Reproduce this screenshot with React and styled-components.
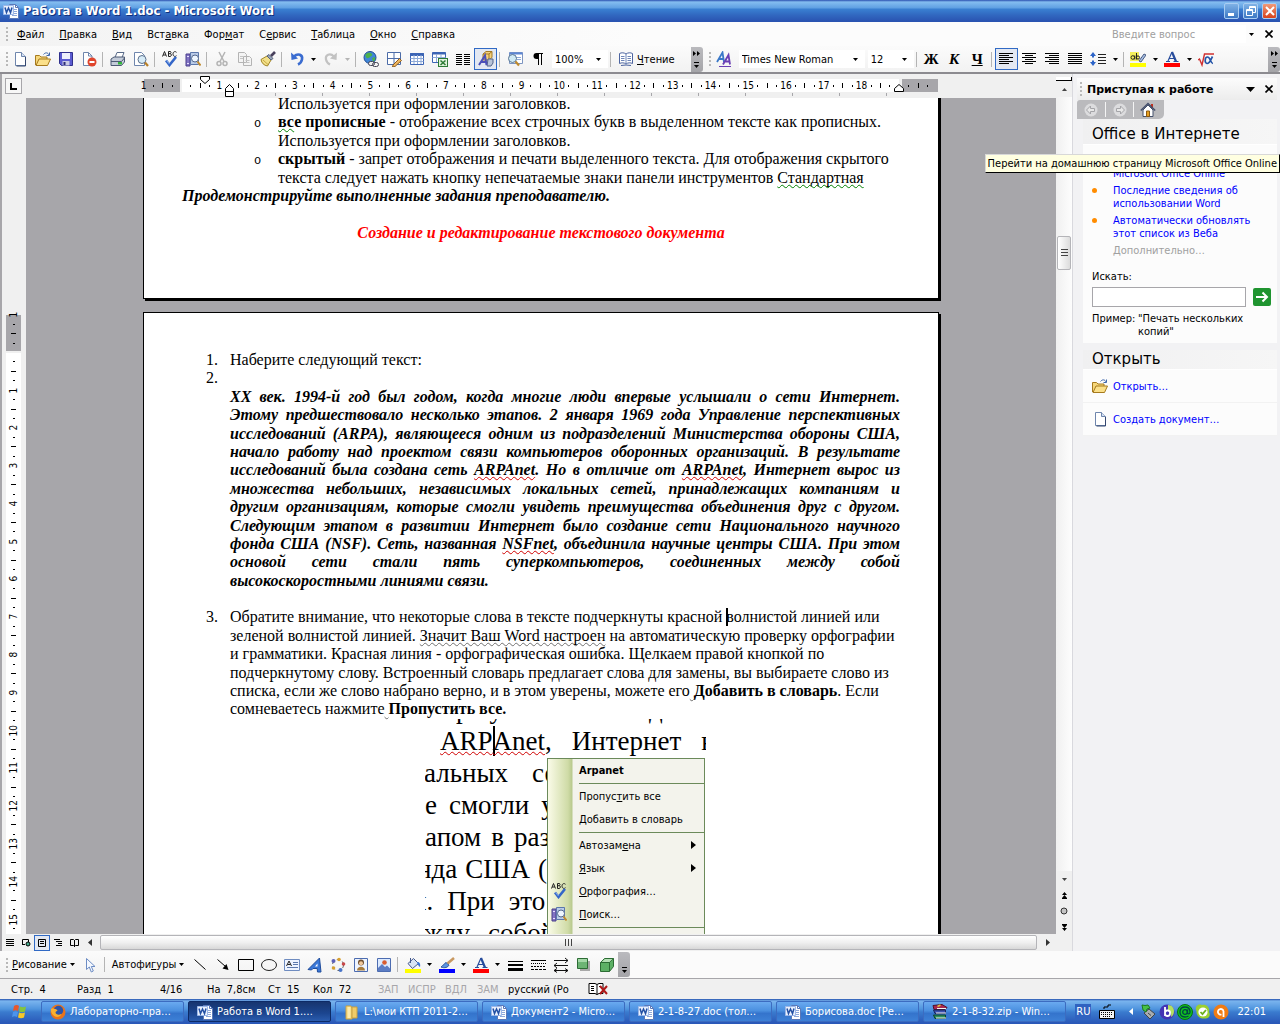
import React from "react"
import styled, { createGlobalStyle, css } from "styled-components"

const GlobalStyle = createGlobalStyle`
  * {
    box-sizing: border-box;
  }
  body {
    margin: 0;
    background: #f0f0f0;
    color: #000;
    font: 11px/13px "DejaVu Sans Condensed", "DejaVu Sans", sans-serif;
  }
  button, input, select {
    margin: 0;
    padding: 0;
    border: 0;
    background: none;
    color: inherit;
    font: inherit;
  }
  svg {
    display: block;
    flex: none;
  }
`

/* ---------- window frame ---------- */

const Desktop = styled.div`
  display: flex;
  flex-direction: column;
  height: 100vh;
  overflow: hidden;
`

const TitleBar = styled.header`
  display: flex;
  align-items: center;
  flex: none;
  height: 22px;
  padding: 0 3px;
  gap: 4px;
  color: #fff;
  background: linear-gradient(#2b50b0 0, #84bdf0 2px, #5f9fe2 8px, #3a80d2 9px, #3168c0 15px, #2a54b2 21px);
`

const WindowTitle = styled.h1`
  flex: 1;
  margin: 0;
  font: bold 13px/16px "DejaVu Sans Condensed", sans-serif;
  text-shadow: 1px 1px #10307c;
`

const WindowButton = styled.button`
  display: flex;
  align-items: center;
  justify-content: center;
  width: 15px;
  height: 16px;
  border: 1px solid #a9cdf2;
  border-radius: 2px;
  background: ${props =>
    props.$close
      ? "linear-gradient(#f09a78, #d8431c)"
      : "linear-gradient(#7fb2e6, #3c78c4)"};
`

const MenuBar = styled.nav`
  display: flex;
  align-items: center;
  flex: none;
  height: 24px;
  padding: 0 0 0 6px;
  background: linear-gradient(90deg, #f3f3f3, #fcfcfc 50%);
`

const Grip = styled.span`
  flex: none;
  width: 2px;
  height: 14px;
  background: repeating-linear-gradient(#b8b8b8 0 2px, transparent 2px 4px);
`

const Menus = styled.div`
  display: flex;
  flex: 1;
  gap: 15px;
  padding-left: 9px;
`

const HelpInput = styled.input`
  width: 136px;
  height: 18px;
  padding-left: 2px;
  background: #fff;
  &::placeholder {
    color: #a0a0a0;
    opacity: 1;
  }
`

/* ---------- toolbars ---------- */

const ToolRow = styled.div`
  display: flex;
  flex: none;
  height: ${props => props.$height}px;
  background: #fbfbfb;
  border-bottom: ${props => props.$line};
`

const Toolbar = styled.div`
  display: flex;
  align-items: center;
  flex: ${props => (props.$grow ? 1 : "none")};
  padding-left: 6px;
  background: linear-gradient(#fbfbfb, #f2f2f2);
`

const ToolButton = styled.button`
  display: flex;
  align-items: center;
  justify-content: center;
  flex: none;
  width: 23px;
  height: 22px;
  ${props =>
    props.$active &&
    css`
      border: 1px solid #316ac5;
      background: #e3e8f2;
    `}
`

const DropButton = styled(ToolButton)`
  width: 11px;
`

const TextButton = styled.button`
  display: flex;
  align-items: center;
  flex: none;
  gap: 3px;
  padding: 0 4px;
  height: 22px;
  white-space: nowrap;
`

const Separator = styled.span`
  flex: none;
  width: 1px;
  height: 15px;
  margin: 0 3px 0 2px;
  background: #b4b4b4;
`

const SelectWrap = styled.label`
  display: grid;
  grid-template-columns: 1fr 12px;
  align-items: center;
  flex: none;
  width: ${props => props.$width}px;
  height: 18px;
  margin-left: 3px;
  background: #fff;
  select {
    grid-area: 1 / 1 / 2 / 3;
    appearance: none;
    width: 100%;
    padding-left: 3px;
  }
  svg {
    grid-area: 1 / 2;
    pointer-events: none;
  }
`

const ToolbarEnd = styled.button`
  display: flex;
  flex-direction: column;
  align-items: center;
  justify-content: flex-end;
  flex: none;
  gap: 6px;
  width: 12px;
  height: 25px;
  margin-left: auto;
  padding-bottom: 4px;
  border-radius: 0 3px 3px 0;
  background: linear-gradient(#bababe, #a4a4a8);
`

const Spacer = styled.span`
  flex: none;
  width: ${props => props.$width}px;
`

const Letter = styled.span`
  font: ${props => props.$font || ""} bold 15px/18px "Liberation Serif", serif;
  text-decoration: ${props => (props.$underline ? "underline" : "none")};
`

/* ---------- editor ---------- */

const Work = styled.div`
  display: flex;
  flex: 1;
  min-height: 0;
`

const Editor = styled.main`
  display: grid;
  grid-template-columns: 24px 1fr 16px;
  grid-template-rows: 24px 1fr 17px;
  flex: 1;
  min-width: 0;
  border-left: 2px solid #a7a6aa;
  border-right: 1px solid #d9d9de;
  background: #f0f0f0;
`

const TabBox = styled.button`
  align-self: center;
  width: 17px;
  height: 16px;
  margin-left: 3px;
  border: 1px solid #a7a6aa;
  background: #f7f7f7;
  svg {
    margin: auto;
  }
`

const HRuler = styled.div`
  display: flex;
  justify-content: center;
  align-items: flex-start;
  padding-top: 5px;
  overflow: hidden;
`

const HStrip = styled.div`
  position: relative;
  flex: none;
  width: 794px;
  height: 13px;
  background: linear-gradient(90deg, #a7a6aa 36px, #f0f0f0 36px 38px, #fff 38px 755px, #f0f0f0 755px 758px, #a7a6aa 758px);
`

const HTicks = styled.div`
  display: flex;
  height: 13px;
  margin-left: -5px;
`

const VRuler = styled.div`
  padding: 217px 0 0 4px;
  overflow: hidden;
`

const VStrip = styled.div`
  width: 15px;
  height: 100%;
  background: linear-gradient(#a7a6aa 36px, #f0f0f0 36px 38px, #fff 38px);
`

const VTicks = styled.div`
  display: flex;
  flex-direction: column;
  height: 100%;
  transform: translateY(-5px);
`

const Centimetre = styled.span`
  display: flex;
  flex-direction: ${props => (props.$vertical ? "column" : "row")};
  flex: 0 0 1cm;
  font-size: 10px;
`

const Mark = styled.span`
  display: flex;
  align-items: center;
  justify-content: center;
  flex: 1 1 0;
  min-width: 0;
  min-height: 0;
  &::before {
    content: "";
    width: ${props => props.$w}px;
    height: ${props => props.$h}px;
    background: #000;
  }
`

const MarkLabel = styled.span`
  display: flex;
  align-items: center;
  justify-content: center;
  flex: 1 1 0;
  min-width: 0;
  min-height: 0;
  line-height: 9px;
  transform: ${props => (props.$vertical ? "rotate(-90deg)" : "none")};
`

const TabStops = styled.div`
  height: 3px;
  margin: 1px 37px 0 85px;
  background: repeating-linear-gradient(90deg, transparent 0 46px, #a7a6aa 46px 47px);
`

const IndentMarker = styled.span`
  position: absolute;
  left: ${props => props.$left}px;
  top: ${props => props.$top}px;
`

const Canvas = styled.div`
  display: flex;
  flex-direction: column;
  align-items: center;
  min-height: 0;
  overflow: hidden;
  background: #a7a6aa;
`

const Page = styled.article`
  flex: none;
  width: 796px;
  height: ${props => props.$height}px;
  margin: ${props => props.$gap};
  padding: ${props => props.$padTop}px 38px 0;
  border: 1px solid #000;
  background: #fff;
  box-shadow: 2px 2px #000;
  font: 16px/1.15 "Liberation Serif", "Times New Roman", serif;
  white-space: nowrap;
`

const BulletList = styled.ul`
  margin: 0;
  padding-left: 96px;
  list-style: none;
  li {
    position: relative;
  }
`

const Bullet = styled.span`
  position: absolute;
  left: -24px;
  font: 12px/22px "Liberation Mono", monospace;
`

const Line = styled.div`
  text-align: ${props => props.$align || "left"};
  text-align-last: ${props => props.$align || "left"};
`

const Emphasis = styled.p`
  margin: 0;
  color: ${props => props.$color || "#000"};
  font-weight: bold;
  font-style: italic;
`

const Numbered = styled.div`
  display: grid;
  grid-template-columns: 24px 1fr;
  padding-left: 24px;
  min-height: 1.15em;
`

const Justified = styled(Emphasis)`
  padding-left: 48px;
`

const Wavy = styled.span`
  text-decoration: underline wavy ${props => props.$color || "#d00000"};
  text-decoration-thickness: 1px;
  text-decoration-skip-ink: none;
  text-underline-offset: 1px;
`

const Caret = styled.span`
  display: inline-block;
  width: 2px;
  height: ${props => props.$height}px;
  margin-right: -2px;
  vertical-align: ${props => props.$drop}px;
  background: #000;
`

const Figure = styled.figure`
  position: relative;
  width: 281px;
  height: 216px;
  margin: 0 0 0 243px;
  overflow: hidden;
`

const BigLine = styled.div`
  display: flex;
  gap: ${props => props.$gap}px;
  height: 32px;
  margin-left: ${props => props.$left}px;
  font-size: 27px;
  line-height: 32px;
`

/* only the descenders of this line show */
const ClippedLine = styled(BigLine)`
  align-items: flex-end;
  height: 6px;
  overflow: hidden;
`

const ContextMenu = styled.ul`
  position: absolute;
  left: 122px;
  top: 39px;
  width: 158px;
  height: 200px;
  margin: 0;
  padding: 0 0 0 25px;
  list-style: none;
  border: 1px solid #6b8a5a;
  background: linear-gradient(90deg, #fafbe8, #cfdba6 20px, #b8c98e 24px, #f3f3ec 25px);
  font: 11px/23px "DejaVu Sans Condensed", "DejaVu Sans", sans-serif;
`

const ContextItem = styled.li`
  display: flex;
  align-items: center;
  height: 23px;
  padding: 0 8px 0 6px;
  font-weight: ${props => (props.$bold ? "bold" : "normal")};
  > svg:first-child {
    margin: 0 12px 0 -28px;
  }
  > svg:last-child {
    margin-left: auto;
  }
`

const ContextRule = styled.li`
  height: 1px;
  margin: 1px 0 1px 6px;
  background: #6b8a5a;
`

const VScroll = styled.div`
  display: flex;
  flex-direction: column;
  align-items: center;
  grid-row: 1 / 4;
  grid-column: 3;
  padding-bottom: 16px;
`

const SplitHandle = styled.span`
  width: 100%;
  height: 4px;
  margin-top: 3px;
  border: solid #000;
  border-width: 0 1px 1px 0;
  background: #fff;
`

const ScrollButton = styled.button`
  display: flex;
  align-items: center;
  justify-content: center;
  flex: none;
  width: 16px;
  height: 16px;
`

const VTrack = styled.div`
  display: flex;
  flex-direction: column;
  flex: 1;
  width: 100%;
  background: linear-gradient(90deg, #f0f0f0, #fdfdfd);
  &::before {
    content: "";
    flex: 3;
  }
  &::after {
    content: "";
    flex: 13;
  }
`

const VThumb = styled.span`
  display: flex;
  align-items: center;
  justify-content: center;
  height: 34px;
  margin: 0 1px;
  border: 1px solid #b4b4b8;
  border-radius: 2px;
  background: linear-gradient(90deg, #fff, #dcdcdc);
`

const HScroll = styled.div`
  display: flex;
  align-items: center;
  grid-column: 1 / 3;
`

const ViewButton = styled(ScrollButton)`
  border: 1px solid ${props => (props.$active ? "#316ac5" : "transparent")};
  background: ${props => (props.$active ? "#e3e8f2" : "none")};
`

const HThumb = styled.span`
  display: flex;
  align-items: center;
  justify-content: center;
  flex: 1;
  height: 15px;
  margin: 0 3px 0 2px;
  border: 1px solid #b4b4b8;
  border-radius: 2px;
  background: linear-gradient(#fff, #f0f0f0 50%, #d8d8d8);
`

/* ---------- task pane ---------- */

const Pane = styled.aside`
  position: relative;
  display: flex;
  flex-direction: column;
  flex: none;
  width: 207px;
  padding: 4px 3px 0 4px;
  background: #f2f2f4;
`

const PaneHead = styled.div`
  display: flex;
  align-items: center;
  height: 22px;
  padding: 0 3px;
  background: linear-gradient(#fcfcfc, #ececec);
  h2 {
    flex: 1;
    margin: 0 0 0 5px;
    font: bold 11px/13px "DejaVu Sans", sans-serif;
  }
`

const PaneNav = styled.div`
  display: flex;
  align-items: center;
  width: 87px;
  height: 19px;
  border-radius: 3px 0 5px 0;
  background: #bababd;
`

const PaneNavButton = styled.button`
  display: flex;
  align-items: center;
  justify-content: center;
  width: 28px;
  height: 15px;
  & + & {
    border-left: 1px solid #f4f4f4;
  }
`

const Section = styled.section`
  margin: 0 0 7px 6px;
  background: #fcfcfc;
  h3 {
    margin: 0;
    padding: ${props => props.$headPad};
    border-bottom: 1px solid #fff;
    background: linear-gradient(90deg, #f0f0f1, #f6f6f6);
    font: 15px/19px "DejaVu Sans", sans-serif;
  }
`

const NewsList = styled.ul`
  margin: 0;
  padding: 22px 9px 0;
  list-style: none;
  li {
    display: flex;
    gap: 16px;
    margin-bottom: 4px;
  }
  li::before {
    content: "";
    flex: none;
    width: 5px;
    height: 5px;
    margin-top: 4px;
    border-radius: 50%;
    background: ${props => props.$dot};
  }
  li:last-child::before,
  li:first-child::before {
    background: none;
  }
`

const PaneLink = styled.a`
  color: ${props => (props.$muted ? "#a0a0a0" : "#0000ff")};
  text-decoration: none;
`

const FileLink = styled(PaneLink)`
  display: flex;
  align-items: center;
  gap: 5px;
  height: 33px;
  padding-left: 9px;
  border-bottom: 1px solid #f2f2f2;
`

const SearchForm = styled.div`
  display: grid;
  grid-template-columns: 1fr 18px;
  gap: 4px 7px;
  padding: 9px 6px 3px 9px;
  label {
    grid-column: 1 / 3;
  }
  input {
    height: 20px;
    min-width: 0;
    border: 1px solid #a7a6aa;
    background: #fff;
  }
`

const Example = styled.p`
  display: grid;
  grid-template-columns: 46px 1fr;
  margin: 0;
  padding: 2px 9px 5px;
`

const Tip = styled.div`
  position: absolute;
  z-index: 2;
  top: 80px;
  right: 0;
  padding: 2px;
  border: 1px solid #000;
  border-top-color: #d8d8d8;
  border-left-color: #d8d8d8;
  background: #ffffe1;
  white-space: nowrap;
`

/* ---------- bottom bars ---------- */

const StatusBar = styled.footer`
  display: flex;
  align-items: center;
  flex: none;
  height: 20px;
  padding-left: 11px;
  background: #f0f0f0;
  white-space: pre;
`

const Status = styled.span`
  flex: none;
  width: ${props => props.$width}px;
  color: ${props => (props.$muted ? "#a7a6aa" : "#000")};
`

const TaskBar = styled.div`
  display: flex;
  align-items: center;
  flex: none;
  gap: 4px;
  height: 25px;
  padding-right: 14px;
  color: #fff;
  background: linear-gradient(#2450ac 0, #7ab4ee 2px, #4f94de 10px, #3a7bce 13px, #2a58b8 24px);
`

const StartButton = styled.button`
  display: flex;
  align-items: center;
  justify-content: center;
  width: 37px;
  height: 24px;
`

const TaskButton = styled.button`
  display: flex;
  align-items: center;
  flex: 0 1 143px;
  gap: 4px;
  height: 21px;
  padding: 0 8px;
  overflow: hidden;
  border: 1px solid ${props => (props.$active ? "#0d2a66" : "#3c6cc0")};
  border-radius: 2px;
  background: ${props =>
    props.$active
      ? "linear-gradient(#17356f, #1c4690 60%, #2a5cae)"
      : "linear-gradient(#6aaaf0, #4b90e0 45%, #3474cc 60%, #3d80d6)"};
  white-space: nowrap;
`

const Tray = styled.div`
  display: flex;
  align-items: center;
  gap: 2px;
  margin-left: auto;
`

const Language = styled.span`
  padding: 1px;
  margin-right: 6px;
  background: #2f62c0;
`

/* ---------- drawings ---------- */

const Svg = ({ w = 16, h = 16, children, ...rest }) => (
  <svg width={w} height={h} viewBox={`0 0 ${w} ${h}`} fill="none" aria-hidden="true" {...rest}>
    {children}
  </svg>
)

const Down = ({ color = "#000" }) => (
  <Svg w={5} h={3}>
    <path d="M0 0h5L2.500 3z" fill={color} />
  </Svg>
)

const Cross = ({ color = "#000" }) => (
  <Svg w={8} h={8}>
    <path d="M.5.5l7 7M7.500.5l-7 7" stroke={color} strokeWidth="1.600" />
  </Svg>
)

const WordIcon = () => (
  <Svg>
    <path d="M6.500 1.500h6l3 3v11h-9z" fill="#fff" stroke="#5a78b8" />
    <path d="M12.500 1.500v3h3" stroke="#5a78b8" />
    <path d="M9 6.500h5M9 8.500h5M9 10.500h5M9 12.500h5" stroke="#8ea8da" />
    <path d="M.5 2.500h10v9H.5z" fill="#eaf1fd" stroke="#9db8e8" />
    <path d="M2 4.500l1.500 5 2-4.500 2 4.500 1.500-5" stroke="#2350a4" strokeWidth="1.500" />
  </Svg>
)

const PageIcon = () => (
  <Svg>
    <path d="M3.500 1.500h6l4 4v9h-10z" fill="#fff" stroke="#6f86ad" />
    <path d="M9.500 1.500v4h4" fill="#d5e0f2" stroke="#6f86ad" />
    <path d="M13.500 6v9h-9" stroke="#33466e" />
  </Svg>
)

const FolderIcon = () => (
  <Svg>
    <path d="M.5 14V4.500h4l1.500 1.500h6v3" fill="#f6d77a" stroke="#a67a1e" />
    <path d="M1 14.500l3-6.500h11.500l-3 6.500z" fill="#fbe08a" stroke="#a67a1e" />
    <path d="M8.500 3.500c2-2.500 4.500-2 5.500.5M14.500 1.500v3h-3" stroke="#3f68ac" />
  </Svg>
)

const SpellIcon = () => (
  <Svg>
    <path d="M.5 5.500L2.500.5l2 5M1.200 4h2.600M6.500.5v5M6.500.5h2l.5 1-.5 1.200h-2M8.500 2.700l1 1.300-1 1.500h-2M14.500 1.300c-1.500-1.500-3.500-.5-3.500 1.700s2 3.200 3.500 1.700" stroke="#222" />
    <path d="M4 9.500l3.500 4.500 6.500-8" stroke="#3466c8" strokeWidth="2.600" />
    <path d="M4.500 9.500l3 3.500" stroke="#8cb0ee" />
  </Svg>
)

const BooksIcon = () => (
  <Svg>
    <path d="M1 3h4v12H1z" fill="#8274c4" stroke="#4a3e8c" />
    <path d="M2 5.500h2M2 12.500h2" stroke="#e8e0ff" />
    <path d="M5.500 1.500h8v12h-8z" fill="#b9cbe8" stroke="#5b77ab" />
    <circle cx="10" cy="7.500" r="3.500" fill="#eef6ff" stroke="#53678c" />
    <path d="M12.500 10.500l3 4" stroke="#c08a2c" strokeWidth="2" />
  </Svg>
)

const LetterBar = ({ color, letterColor = "#274c9c" }) => (
  <Svg>
    <path d="M4 10L8 1" stroke={letterColor} strokeWidth="1.200" />
    <path d="M8 1l4 9.500" stroke={letterColor} strokeWidth="2.200" />
    <path d="M5 7.500h6M2 10.500h4M9.500 10.500h5" stroke={letterColor} />
    <path d="M0 12h16v4H0z" fill={color} />
  </Svg>
)

const AlignIcon = ({ lines, color = "#000" }) => (
  <Svg>
    {lines.map(([x, w], i) => (
      <path key={i} d={`M${x} ${2.5 + i * 2}h${w}`} stroke={color} />
    ))}
  </Svg>
)

const icons = {
  page: <PageIcon />,
  folder: <FolderIcon />,
  spell: <SpellIcon />,
  books: <BooksIcon />,
  save: (
    <Svg>
      <path d="M1.500 1.500h13v13h-11l-2-2z" fill="#5b5bd0" stroke="#30308c" />
      <path d="M4 2h8v6H4z" fill="#eef0fb" />
      <path d="M4.500 10h7v4.500h-7z" fill="#c9cbe4" />
      <path d="M5.500 11h2v3h-2z" fill="#2b2b78" />
    </Svg>
  ),
  permission: (
    <Svg>
      <path d="M2.500 1.500h5l3.500 3.500v9.500H2.500z" fill="#fff" stroke="#6f86ad" />
      <path d="M7.500 1.500v3.500H11" stroke="#6f86ad" />
      <circle cx="11" cy="11" r="4.500" fill="#e0442c" />
      <path d="M8.500 11h5" stroke="#fff" strokeWidth="2" />
    </Svg>
  ),
  print: (
    <Svg>
      <path d="M5 6.500L7 1.500h7l-2 5" fill="#fff" stroke="#586a88" />
      <path d="M1 8l3-2h10.500v5l-3 3.500H1z" fill="#c3cbd8" stroke="#4c5a74" />
      <path d="M1 10.500h10.500l3-3.500" stroke="#4c5a74" />
      <path d="M8 11h4v2.500H8z" fill="#36b43c" />
    </Svg>
  ),
  preview: (
    <Svg>
      <path d="M1.500 1.500h7l3 3v10h-10z" fill="#fff" stroke="#6f86ad" />
      <circle cx="9" cy="8.500" r="4" fill="#d7ecf8" stroke="#5c6f8c" />
      <path d="M12 11.500l3 3.500" stroke="#b98028" strokeWidth="2.200" />
    </Svg>
  ),
  cut: (
    <Svg>
      <path d="M5 1l5 9.500M11 1L6 10.500" stroke="#b4b4b4" strokeWidth="1.500" />
      <circle cx="5" cy="12.500" r="2" stroke="#b4b4b4" strokeWidth="1.500" />
      <circle cx="11" cy="12.500" r="2" stroke="#b4b4b4" strokeWidth="1.500" />
    </Svg>
  ),
  copy: (
    <Svg>
      <path d="M1.500 1.500h6l2 2v8h-8zM6.500 5.500h6l2 2v7h-8z" fill="#f4f4f4" stroke="#b4b4b4" />
      <path d="M8.500 9.500h4M8.500 11.500h4M3 5.500h3M3 7.500h3" stroke="#c4c4c4" />
    </Svg>
  ),
  brush: (
    <Svg>
      <path d="M1 8.500l6-3.500 4 4-3.500 6C4 14.500 1.500 12 1 8.500z" fill="#f2e08a" stroke="#a08428" />
      <path d="M3 9l5 4.500" stroke="#c8a840" />
      <path d="M7 5l2-1.500 4 4L11 9z" fill="#9aa6ba" stroke="#55617a" />
      <path d="M11 5l4-4" stroke="#48405c" strokeWidth="2.600" />
    </Svg>
  ),
  undo: (
    <Svg>
      <path d="M5 5.500c4-4 9-1.500 8 3-.5 2.500-2 4-4 5" stroke="#3a6cd0" strokeWidth="2.600" />
      <path d="M2 1.500l.5 7.500 6.500-1.500z" fill="#3a6cd0" />
    </Svg>
  ),
  redo: (
    <Svg>
      <path d="M11 5.500c-4-4-9-1.500-8 3 .5 2.500 2 4 4 5" stroke="#c2c2c2" strokeWidth="2.200" />
      <path d="M14 1.500l-.5 7.500L7 7.500z" fill="#c2c2c2" />
    </Svg>
  ),
  globe: (
    <Svg>
      <circle cx="7" cy="6.500" r="6" fill="#3f86d8" stroke="#1f4c94" />
      <path d="M3 3c2-2 5-1.500 6 0s-1 2-2 3-3 2-4 0-1-2 0-3zM9 7l3-1v3l-2 2z" fill="#4cb04c" />
      <rect x="5.500" y="10.500" width="6" height="4" rx="2" fill="#eee" stroke="#445" />
      <rect x="9.500" y="11.500" width="6" height="4" rx="2" stroke="#445" />
    </Svg>
  ),
  tableEdit: (
    <Svg>
      <path d="M1.500 1.500h13v12h-13zM8 1.500v12M1.500 7.500h13" fill="#fff" stroke="#4c6ca8" />
      <path d="M7 14l6.500-6.500 2 2L9 15.500l-2.500.5z" fill="#f0b860" stroke="#8c5a1c" />
    </Svg>
  ),
  table: (
    <Svg>
      <path d="M1.500 2.500h13v11h-13z" fill="#fff" stroke="#3c64b4" />
      <path d="M1.500 2.500h13v2h-13z" fill="#3c64b4" stroke="#3c64b4" />
      <path d="M1.500 7.500h13M1.500 10.500h13M5 4v9M8.500 4v9M12 4v9" stroke="#8eaad8" />
    </Svg>
  ),
  excel: (
    <Svg>
      <path d="M.5 1.500h13v10H.5z" fill="#fff" stroke="#3c64b4" />
      <path d="M.5 2.500h13" stroke="#3c64b4" strokeWidth="2" />
      <path d="M.5 6.500h13M4.500 3v8M9 3v8" stroke="#8eaad8" />
      <rect x="6.500" y="7.500" width="9" height="8" fill="#e0f2dc" stroke="#2c7a34" />
      <path d="M8.500 9.500l5 4.500M13.500 9.500l-5 4.500" stroke="#2c7a34" strokeWidth="1.500" />
    </Svg>
  ),
  columns: (
    <Svg>
      <path d="M1 3.500h6M9 3.500h6M1 5.500h6M9 5.500h6M1 7.500h6M9 7.500h6M1 9.500h6M9 9.500h6M1 11.500h6M9 11.500h6M1 13.500h6M9 13.500h6" stroke="#000" />
    </Svg>
  ),
  drawing: (
    <Svg>
      <path d="M5 3l3-2.500h6v6L11 9H5z" fill="#f4d07c" stroke="#a47a24" />
      <path d="M5 3h6v6M11 3l3-2.500" stroke="#a47a24" />
      <path d="M10 8h5v4l-2 3h-4z" fill="#b8c4d8" stroke="#55658a" />
      <path d="M1 14L7 4.500l1.500 9.500M3 11h5" stroke="#4c50b8" strokeWidth="2" />
    </Svg>
  ),
  map: (
    <Svg>
      <path d="M2.500 1.500h13v11h-13z" fill="#fff" stroke="#7c94c0" />
      <path d="M2.500 2.500h13" stroke="#5c86d4" strokeWidth="2" />
      <path d="M9 6.500h5M10 8.500h4" stroke="#8eaad8" />
      <circle cx="5.500" cy="7.500" r="4" fill="#cfeaf4" stroke="#547090" />
      <path d="M8.500 10.500l3.500 4" stroke="#c08a2c" strokeWidth="2.200" />
    </Svg>
  ),
  pilcrow: (
    <Svg>
      <path d="M7 2.500h6M8.500 2v12M11.500 2v12" stroke="#000" />
      <path d="M8.500 2H6.500a3 3 0 000 6h2z" fill="#000" />
    </Svg>
  ),
  reading: (
    <Svg>
      <path d="M1.500 2.500c2-1 4.500-1 6.500.5 2-1.500 4.500-1.500 6.500-.5v10c-2-1-4.500-1-6.500.5-2-1.500-4.500-1.500-6.500-.5z" fill="#fff" stroke="#4c64a0" />
      <path d="M8 3v10M3 5.500h3.500M3 7.500h3.500M3 9.500h3.500M9.500 5.500H13M9.500 7.500H13M9.500 9.500H13" stroke="#6f86b8" />
      <path d="M3 14.500l5-.5 5 .5" stroke="#4c64a0" />
    </Svg>
  ),
  styles: (
    <Svg>
      <path d="M1 11L6.500 1.500 8 11M3 8h4.500" stroke="#3a78c8" strokeWidth="1.800" />
      <path d="M7 13.500L12.500 4l1.500 9.500M9 10.500h4.500" stroke="#6a3fb4" strokeWidth="1.800" />
      <path d="M3 15.500h12" stroke="#6a3fb4" />
    </Svg>
  ),
  spacing: (
    <Svg>
      <path d="M3 4v2.500M3 9.500V12" stroke="#2c64c8" strokeWidth="2" />
      <path d="M0 5l3-4 3 4zM0 11l3 4 3-4z" fill="#2c64c8" />
      <path d="M8 3.500h8M8 6.500h8M8 9.500h8M8 12.500h8" stroke="#222" />
    </Svg>
  ),
  highlight: (
    <Svg>
      <path d="M0 1h9v9H0z" fill="#f4f05c" />
      <circle cx="2.800" cy="6.500" r="1.800" stroke="#222" />
      <path d="M4.800 4.500v4M6.500 2v6.500" stroke="#222" />
      <circle cx="8" cy="6.500" r="1.600" stroke="#222" />
      <path d="M9 10l5-7 2 1-5 7z" fill="#a8c0e4" stroke="#4a5c84" />
      <path d="M0 12h16v4H0z" fill="#ffff00" />
    </Svg>
  ),
  formula: (
    <Svg>
      <path d="M0 9l1.500-1L4 14l2.500-11H16" stroke="#d03030" strokeWidth="1.400" />
      <path d="M14.500 5.500c-1.500 3-3 7-5.500 7s-2.500-6.500.5-6.500 3 6.500 5.500 6.500" stroke="#2454a8" strokeWidth="1.700" />
    </Svg>
  ),
  cursor: (
    <Svg>
      <path d="M4.500 1.500v11l2.800-2.500 2 5 2-1-2-4.500H13z" fill="#f4f8ff" stroke="#6c8cc4" />
    </Svg>
  ),
  line: (
    <Svg>
      <path d="M2.500 2.500l11 10" stroke="#000" />
    </Svg>
  ),
  arrow: (
    <Svg>
      <path d="M2.500 2.500l8 7" stroke="#000" />
      <path d="M13.500 13l-6-1.500 4-4.500z" fill="#000" />
    </Svg>
  ),
  rect: (
    <Svg>
      <path d="M.5 2.500h15v11H.5z" stroke="#000" />
    </Svg>
  ),
  oval: (
    <Svg>
      <ellipse cx="8" cy="8" rx="7.500" ry="5.500" stroke="#222" />
    </Svg>
  ),
  textBox: (
    <Svg>
      <path d="M.5 2.500h15v11H.5z" fill="#eef4ff" stroke="#6f8cc0" />
      <path d="M2.500 9l2.500-5 2.500 5M3.500 7.500h3" stroke="#222" />
      <path d="M9 5.500h5M9 7.500h5M3 10.500h11" stroke="#5c78ac" />
    </Svg>
  ),
  wordArt: (
    <Svg>
      <path d="M1 12.500L12.500 1 14 15h-3.500l-.3-3.500H6L4.500 13z" fill="#3a78d8" stroke="#1f4c9c" />
      <path d="M8 9.500l2.500-3V9.500z" fill="#fff" />
    </Svg>
  ),
  diagram: (
    <Svg>
      <circle cx="8" cy="8" r="5.500" stroke="#555" strokeDasharray="3 3" />
      <circle cx="3.500" cy="4" r="2" fill="#5c60b8" />
      <circle cx="9" cy="2.500" r="1.800" fill="#d8a030" />
      <circle cx="13.500" cy="7" r="1.800" fill="#c84848" />
      <circle cx="10.500" cy="13" r="2" fill="#4874c8" />
      <circle cx="3.500" cy="11" r="1.800" fill="#d8a030" />
    </Svg>
  ),
  clipArt: (
    <Svg>
      <path d="M1.500 1.500h13v13h-13z" fill="#eef4ff" stroke="#4c6cb0" />
      <circle cx="8" cy="5.500" r="3" fill="#705030" />
      <circle cx="8" cy="6.200" r="2" fill="#f0c89c" />
      <path d="M4 13.500c0-5 8-5 8 0z" fill="#a87c3c" />
    </Svg>
  ),
  picture: (
    <Svg>
      <path d="M1.500 1.500h13v13h-13z" fill="#dceaff" stroke="#4c6cb0" />
      <circle cx="8.500" cy="5.500" r="2.300" fill="#d85c30" />
      <path d="M2 14v-3l4-4 3 3 2-1.500 3 3V14z" fill="#5b7cc4" />
    </Svg>
  ),
  bucket: (
    <Svg>
      <path d="M3 6.500L8.500 1.500l5 5-6 5z" fill="#d8e4f4" stroke="#44588c" />
      <path d="M5.500 6V1" stroke="#44588c" />
      <path d="M12 5c3 0 3.500 2 3 5-1.500-1-2.500-2.500-3-5z" fill="#3874d8" />
      <path d="M0 12h16v4H0z" fill="#ffff00" />
    </Svg>
  ),
  paint: (
    <Svg>
      <path d="M2 10c2-1 3-3.500 5-4.500L10 8c-1 2.500-4.500 3.500-8 2z" fill="#5c94e0" stroke="#2c54a0" />
      <path d="M8.500 6.500L15 1" stroke="#c89860" strokeWidth="2.600" />
      <path d="M0 12h16v4H0z" fill="#0000ff" />
    </Svg>
  ),
  lineStyle: (
    <Svg>
      <path d="M1 4.500h15" stroke="#000" />
      <path d="M1 8h15" stroke="#000" strokeWidth="2" />
      <path d="M1 12.500h15" stroke="#000" strokeWidth="3" />
    </Svg>
  ),
  dashStyle: (
    <Svg>
      <path d="M1 3.500h15" stroke="#000" />
      <path d="M1 6.500h15" stroke="#000" strokeDasharray="1 1" />
      <path d="M1 9.500h15" stroke="#000" strokeDasharray="2 1" />
      <path d="M1 12.500h15" stroke="#000" strokeDasharray="3 1" />
    </Svg>
  ),
  arrowStyle: (
    <Svg>
      <path d="M1 3.500h14M12 1l3 2.500L12 6M15 8.500H1M4 6L1 8.500 4 11M1 13.500h14M12 11.500l3 2-3 2M4 11.500l-3 2 3 2" stroke="#111" />
    </Svg>
  ),
  shadow: (
    <Svg>
      <path d="M4 4h10v10H4z" fill="#a8a8a8" />
      <path d="M1.500 1.500h10v10h-10z" fill="#6cb474" stroke="#2c6c34" />
      <path d="M2 2h9v3H2z" fill="#a4d8a8" />
    </Svg>
  ),
  cube: (
    <Svg>
      <path d="M1.500 5.500l4-4h9v8l-4 5h-9z" fill="#5cb064" stroke="#2c6c34" />
      <path d="M1.500 5.500h9v9M10.500 5.500l4-4" stroke="#2c6c34" />
      <path d="M2.500 5l3.500-3h7.500l-3 3z" fill="#b4e0b4" />
    </Svg>
  ),
  bookCheck: (
    <Svg w={20} h={14}>
      <path d="M1 1.500h6l2 1 2-1h4v10h-4l-2 1-2-1H1z" fill="#fff" stroke="#000" />
      <path d="M9 2.500v10M3 4.500h3M3 6.500h3M3 8.500h3M11 4.500h2" stroke="#000" />
      <path d="M12 4l7 8M19 4l-7 8" stroke="#b01818" strokeWidth="2" />
    </Svg>
  ),
  home: (
    <Svg>
      <path d="M11 2h2v4h-2z" fill="#c03020" />
      <path d="M3 8v6.500h10V8L8 3z" fill="#fff" stroke="#44506c" />
      <path d="M.8 8.500L8 1.500l7.200 7" stroke="#44506c" strokeWidth="1.500" />
      <path d="M6.500 9h3v5.500h-3z" fill="#e8a020" stroke="#8c5a10" />
    </Svg>
  ),
  firefox: (
    <Svg>
      <circle cx="8" cy="8" r="7.500" fill="#e8731c" />
      <circle cx="8.500" cy="6.500" r="4.700" fill="#2c54a8" />
      <path d="M1 5c1-1 2.500-1 3.500 0 1.500 0 2.500.5 3 1.500L5.500 8c0 2.500 3 3.500 6 2-1 2.500-4 3.500-6.500 2.500C2 11 .5 8 1 5z" fill="#f8b030" />
    </Svg>
  ),
  folderTask: (
    <Svg>
      <path d="M2 2h5l1 2v11H2z" fill="#f8e08c" stroke="#c8a040" />
      <path d="M8 3h5v11H8z" fill="#f0cc68" stroke="#c8a040" />
      <path d="M5 3v11" stroke="#fff6cc" />
    </Svg>
  ),
  rar: (
    <Svg>
      <path d="M1 1.500l9-1 5 3-2 2H2z" fill="#a82850" stroke="#501028" />
      <path d="M1.500 6h12v3.500H3z" fill="#3c50b0" stroke="#182458" />
      <path d="M1.500 11h12v3.500H3z" fill="#2c9060" stroke="#0c4028" />
      <path d="M5 4.500h9M4 9h10M4 14h10" stroke="#f4f4f4" />
      <path d="M5.500 2.500l3-1.500" stroke="#e0c040" strokeWidth="1.500" />
    </Svg>
  ),
  flag: (
    <Svg w={18} h={18}>
      <path d="M4 3c2-1.500 4-1 5 0L8 8c-1.500-1-3.500-1-5 0z" fill="#e8582c" />
      <path d="M10 3.500c2 1 4 1 6 0L15 8.500c-2 1-4 1-6 0z" fill="#84c43c" />
      <path d="M3 9c1.500-1 3.500-1 5 0l-1 5c-1.500-1-3.500-1-5 0z" fill="#4c94ec" />
      <path d="M9 9.500c2 1 4 1 6 0l-1 5c-2 1-4 1-6 0z" fill="#f8c828" />
    </Svg>
  ),
  keyboard: (
    <Svg>
      <path d="M5 5V3h4V1h3" stroke="#000" />
      <path d="M.5 6.500h15v8H.5z" fill="#f4f4f4" stroke="#000" />
      <path d="M2 8.500h12M2 10.500h12M4 12.500h8" stroke="#000" strokeDasharray="1 1" />
    </Svg>
  ),
  usb: (
    <Svg>
      <path d="M8 5l6 5-5 5-6-6z" fill="#a8acb0" stroke="#40464c" />
      <path d="M7 9l3 2.500" stroke="#40464c" />
      <path d="M1 1l3 .5L7 1l2 3-3 1-1 3-3-2z" fill="#48c048" stroke="#1c7c1c" />
    </Svg>
  ),
  bTray: (
    <Svg>
      <circle cx="8" cy="8" r="7.500" fill="#4434b4" />
      <path d="M9 1c4 0 6 3 6 6s-1 5-3 6c1-4-1-7-3-7z" fill="#b4e060" />
      <path d="M6 3v9M6 8.500a2.500 2.500 0 115 1 2.500 2.500 0 01-5 0z" stroke="#fff" strokeWidth="1.800" />
    </Svg>
  ),
  agent: (
    <Svg>
      <circle cx="8" cy="8" r="7.500" fill="#10c020" stroke="#087010" />
      <circle cx="8" cy="8" r="2.300" stroke="#044" strokeWidth="1.300" />
      <path d="M10.500 5.500v3c0 2 2.500 2 2.500-.5 0-3-2-5-5-5S3 5 3 8s2 5 5 5c1.500 0 2.500-.3 3.500-1" stroke="#044" strokeWidth="1.300" />
    </Svg>
  ),
  skype: (
    <Svg>
      <path d="M3 1c2-1 4 0 4 0 5-1 8 3 7 7 2 3 0 7-4 6.500C5 15 1 12 1.500 7 0 5 1 2 3 1z" fill="#9cd030" />
      <circle cx="8" cy="8" r="4.600" fill="#fff" />
      <path d="M5.500 8l2 2.200L11 6" stroke="#6cb020" strokeWidth="1.800" />
    </Svg>
  ),
  avast: (
    <Svg>
      <circle cx="8" cy="8" r="7.500" fill="#f07c14" />
      <path d="M10.500 12V7.500a2.800 2.800 0 10-2 3M10.500 7v6" stroke="#fff" strokeWidth="1.800" />
    </Svg>
  ),
}

/* ---------- data ---------- */

const menus = [
  ["", "Ф", "айл"],
  ["", "П", "равка"],
  ["", "В", "ид"],
  ["Вст", "а", "вка"],
  ["Фор", "м", "ат"],
  ["С", "е", "рвис"],
  ["", "Т", "аблица"],
  ["", "О", "кно"],
  ["", "С", "правка"],
]

const standardTools = [
  ["page", "Создать"], ["folder", "Открыть"], ["save", "Сохранить"], ["permission", "Разрешения"], null,
  ["print", "Печать"], ["preview", "Просмотр"], null,
  ["spell", "Правописание"], ["books", "Справочные материалы"], null,
  ["cut", "Вырезать"], ["copy", "Копировать"], ["brush", "Формат по образцу"], null,
  ["undo", "Отменить", "#000"], ["redo", "Вернуть", "#b4b4b4"], null,
  ["globe", "Гиперссылка"], ["tableEdit", "Таблицы и границы"], ["table", "Добавить таблицу"],
  ["excel", "Добавить таблицу Excel"], ["columns", "Колонки"], ["drawing", "Рисование", null, true], null,
  ["map", "Схема документа"], ["pilcrow", "Непечатаемые знаки"],
]

const drawingTools = [
  ["line", "Линия"], ["arrow", "Стрелка"], ["rect", "Прямоугольник"], ["oval", "Овал"],
  ["textBox", "Надпись"], ["wordArt", "WordArt"], ["diagram", "Диаграмма"],
  ["clipArt", "Картинка"], ["picture", "Рисунок"], null,
  ["bucket", "Цвет заливки", "#000"], ["paint", "Цвет линий", "#000"],
]

const shapeTools = [
  ["lineStyle", "Тип линии"], ["dashStyle", "Тип штриха"], ["arrowStyle", "Вид стрелки"],
  ["shadow", "Тень"], ["cube", "Объем"],
]

const fullLine = [1, 14]
const aligns = [
  ["По левому краю", [fullLine, [1, 10], fullLine, [1, 10], fullLine, [1, 10]], true],
  ["По центру", [fullLine, [4, 8], fullLine, [4, 8], fullLine, [4, 8]]],
  ["По правому краю", [fullLine, [5, 10], fullLine, [5, 10], fullLine, [5, 10]]],
  ["По ширине", [fullLine, fullLine, fullLine, fullLine, fullLine, fullLine]],
]

const essay = [
  "XX век. 1994-й год был годом, когда многие люди впервые услышали о сети Интернет.",
  "Этому предшествовало несколько этапов. 2 января 1969 года Управление перспективных",
  "исследований (ARPA), являющееся одним из подразделений Министерства обороны США,",
  "начало работу над проектом связи компьютеров оборонных организаций. В результате",
  <>исследований была создана сеть <Wavy>ARPAnet</Wavy>. Но в отличие от <Wavy>ARPAnet</Wavy>, Интернет вырос из</>,
  "множества небольших, независимых локальных сетей, принадлежащих компаниям и",
  "другим организациям, которые смогли увидеть преимущества объединения друг с другом.",
  "Следующим этапом в развитии Интернет было создание сети Национального научного",
  <>фонда США (NSF). Сеть, названная <Wavy>NSFnet</Wavy>, объединила научные центры США. При этом</>,
  "основой сети стали пять суперкомпьютеров, соединенных между собой",
]

const statuses = [
  ["Стр.  4", 66], ["Разд  1", 83], ["4/16", 47], ["На  7,8см", 61], ["Ст  15", 45], ["Кол  72", 65],
  ["ЗАП", 30, true], ["ИСПР", 37, true], ["ВДЛ", 32, true], ["ЗАМ", 31, true], ["русский (Ро", 80],
]

const tasks = [
  ["firefox", "Лабораторно-пра…"],
  ["word", "Работа в Word 1.…", true],
  ["folderTask", "L:\\мои КТП 2011-2…"],
  ["word", "Документ2 - Micro…"],
  ["word", "2-1-8-27.doc (тол…"],
  ["word", "Борисова.doc [Ре…"],
  ["rar", "2-1-8-32.zip - Win…"],
]

/* ---------- parts ---------- */

const Tools = ({ items }) =>
  items.map((item, i) => {
    if (!item) return <Separator key={i} />
    const [name, title, drop, active] = item
    return (
      <React.Fragment key={i}>
        <ToolButton aria-label={title} $active={active}>{icons[name]}</ToolButton>
        {drop && (
          <DropButton aria-label={`${title}: варианты`}>
            <Down color={drop} />
          </DropButton>
        )}
      </React.Fragment>
    )
  })

const Select = ({ label, width, value }) => (
  <SelectWrap $width={width}>
    <select aria-label={label} defaultValue={value}>
      <option>{value}</option>
    </select>
    <Down />
  </SelectWrap>
)

const End = ({ more }) => (
  <ToolbarEnd aria-label="Параметры панелей инструментов">
    {more && (
      <Svg w={7} h={5}>
        <path d="M0 0l3 2.500L0 5zM4 0l3 2.500L4 5z" fill="#000" />
      </Svg>
    )}
    <Svg w={5} h={6}>
      <path d="M0 .5h5" stroke="#000" />
      <path d="M0 3h5L2.500 6z" fill="#000" />
    </Svg>
  </ToolbarEnd>
)

const Ticks = ({ from, to, vertical }) => {
  const cells = []
  for (let n = from; n <= to; n++) {
    cells.push(
      <Centimetre key={n} $vertical={vertical}>
        <MarkLabel $vertical={vertical}>{n === 0 || n === 19 ? "" : Math.abs(n)}</MarkLabel>
        <Mark $w={vertical ? 2 : 1} $h={vertical ? 1 : 2} />
        <Mark $w={vertical ? 5 : 1} $h={vertical ? 1 : 5} />
        <Mark $w={vertical ? 2 : 1} $h={vertical ? 1 : 2} />
      </Centimetre>
    )
  }
  return cells
}

const TopBars = () => (
  <>
    <TitleBar>
      <WordIcon />
      <WindowTitle>Работа в Word 1.doc - Microsoft Word</WindowTitle>
      <WindowButton aria-label="Свернуть">
        <Svg w={9} h={9}><path d="M1 7.500h6" stroke="#fff" strokeWidth="3" /></Svg>
      </WindowButton>
      <WindowButton aria-label="Восстановить">
        <Svg w={10} h={10}><path d="M3.500 3V.5h6v6H7M3.500 1.500h6M.5 3.500h6v6h-6zM.5 4.500h6" stroke="#fff" /></Svg>
      </WindowButton>
      <WindowButton aria-label="Закрыть" $close>
        <Svg w={10} h={10}><path d="M1 1l8 8M9 1L1 9" stroke="#fff" strokeWidth="2" /></Svg>
      </WindowButton>
    </TitleBar>
    <MenuBar>
      <Grip />
      <Menus>
        {menus.map(([before, key, after]) => (
          <button key={before + key + after}>{before}<u>{key}</u>{after}</button>
        ))}
      </Menus>
      <HelpInput aria-label="Справка" placeholder="Введите вопрос" />
      <DropButton as="span"><Down /></DropButton>
      <ToolButton aria-label="Закрыть документ"><Cross /></ToolButton>
    </MenuBar>
    <ToolRow $height={28} $line="2px solid #8c8b90">
      <Toolbar>
        <Grip />
        <Tools items={standardTools} />
        <Select label="Масштаб" width={56} value="100%" />
        <Separator />
        <TextButton>{icons.reading}<span><u>Ч</u>тение</span></TextButton>
        <Spacer $width={12} />
        <End more />
      </Toolbar>
      <Toolbar $grow>
        <Grip />
        <Spacer $width={2} />
        <ToolButton aria-label="Стили и форматирование">{icons.styles}</ToolButton>
        <Select label="Шрифт" width={126} value="Times New Roman" />
        <Select label="Размер" width={46} value="12" />
        <Separator />
        <ToolButton aria-label="Полужирный"><Letter>Ж</Letter></ToolButton>
        <ToolButton aria-label="Курсив"><Letter $font="italic">К</Letter></ToolButton>
        <ToolButton aria-label="Подчеркнутый"><Letter $underline>Ч</Letter></ToolButton>
        <Separator />
        {aligns.map(([title, lines, active]) => (
          <ToolButton key={title} aria-label={title} $active={active}><AlignIcon lines={lines} /></ToolButton>
        ))}
        <Tools items={[["spacing", "Междустрочный интервал", "#000"], null, ["highlight", "Выделение цветом", "#000"]]} />
        <ToolButton aria-label="Цвет шрифта"><LetterBar color="#ff0000" /></ToolButton>
        <DropButton aria-label="Цвет шрифта: варианты"><Down /></DropButton>
        <Tools items={[["formula", "Формула"]]} />
        <End more />
      </Toolbar>
    </ToolRow>
  </>
)

const Document = () => (
  <Canvas>
    <Page $height={206} $gap="-5px 0 13px" $padTop={1}>
      <BulletList>
        <li><Line>Используется при оформлении заголовков.</Line></li>
        <li>
          <Bullet>o</Bullet>
          <Line><b><Wavy $color="#008000">вс</Wavy>е прописные</b> - отображение всех строчных букв в выделенном тексте как прописных.</Line>
          <Line>Используется при оформлении заголовков.</Line>
        </li>
        <li>
          <Bullet>o</Bullet>
          <Line><b>скрытый</b> - запрет отображения и печати выделенного текста. Для отображения скрытого</Line>
          <Line>текста следует нажать кнопку непечатаемые знаки панели инструментов <Wavy $color="#008000">Стандартная</Wavy></Line>
        </li>
      </BulletList>
      <Emphasis>Продемонстрируйте выполненные задания преподавателю.</Emphasis>
      <br />
      <Emphasis $color="#ff0000"><Line $align="center">Создание и редактирование текстового документа</Line></Emphasis>
    </Page>
    <Page $height={900} $gap="0" $padTop={38}>
      <Numbered><span>1.</span><span>Наберите следующий текст:</span></Numbered>
      <Numbered><span>2.</span></Numbered>
      <Justified>
        {essay.map((line, i) => (
          <Line key={i} $align="justify">{line}</Line>
        ))}
        <Line>высокоскоростными линиями связи.</Line>
      </Justified>
      <br />
      <Numbered>
        <span>3.</span>
        <div>
          <Line>Обратите внимание, что некоторые слова в тексте подчеркнуты красной <Caret $height={18} $drop={-4} />волнистой линией или</Line>
          <Line>зеленой волнистой линией. <Wavy $color="#707070">Значит Ваш Word настроен</Wavy> на автоматическую проверку орфографии</Line>
          <Line>и грамматики. Красная линия - орфографическая ошибка. Щелкаем правой кнопкой по</Line>
          <Line>подчеркнутому слову. Встроенный словарь предлагает слова для замены, вы выбираете слово из</Line>
          <Line>списка, если же слово набрано верно, и в этом уверены, можете его<Wavy $color="#707070"> </Wavy><b>Добавить в словарь</b>. Если</Line>
          <Line>сомневаетесь нажмите<Wavy $color="#707070"> </Wavy><b>Пропустить все.</b></Line>
        </div>
      </Numbered>
      <Figure>
        <ClippedLine $left={31} $gap={20}>
          <span>р</span><span>у</span><Spacer $width={106} /><span>д</span>
        </ClippedLine>
        <BigLine $left={15} $gap={20}>
          <span><Wavy>ARP<Caret $height={30} $drop={-6} />Anet</Wavy>,</span><span>Интернет</span><span>н</span>
        </BigLine>
        <BigLine $left={-1} $gap={24}><span>альных</span><span>се</span></BigLine>
        <BigLine $left={0} $gap={12}><span>е</span><span>смогли</span><span>у</span></BigLine>
        <BigLine $left={0} $gap={10}><span>апом</span><span>в</span><span>раз</span></BigLine>
        <BigLine $left={-8} $gap={8}><span>нда</span><span>США</span><span>(</span></BigLine>
        <BigLine $left={-12} $gap={14}><span>л.</span><span>При</span><span>это</span></BigLine>
        <BigLine $left={-1} $gap={18}><span>жду</span><span>собой</span></BigLine>
        <ContextMenu>
          <ContextItem $bold>Arpanet</ContextItem>
          <ContextRule />
          <ContextItem><span>Пропус<u>т</u>ить все</span></ContextItem>
          <ContextItem><span><u>Д</u>обавить в словарь</span></ContextItem>
          <ContextRule />
          <ContextItem><span>Автозам<u>е</u>на</span><Svg w={5} h={8}><path d="M0 0l5 4-5 4z" fill="#000" /></Svg></ContextItem>
          <ContextItem><span><u>Я</u>зык</span><Svg w={5} h={8}><path d="M0 0l5 4-5 4z" fill="#000" /></Svg></ContextItem>
          <ContextItem><SpellIcon /><span><u>О</u>рфография…</span></ContextItem>
          <ContextItem><BooksIcon /><span><u>П</u>оиск…</span></ContextItem>
          <ContextRule />
        </ContextMenu>
      </Figure>
    </Page>
  </Canvas>
)

const EditorArea = () => (
  <Editor>
    <TabBox aria-label="Позиция табуляции">
      <Svg w={7} h={7}><path d="M1 0v6h6" stroke="#000" strokeWidth="2" /></Svg>
    </TabBox>
    <HRuler>
      <HStrip>
        <HTicks><Ticks from={-1} to={19} /></HTicks>
        <TabStops />
        <IndentMarker $left={56} $top={-3}>
          <Svg w={10} h={8}><path d="M.5.5h9v3L5 7.500.5 3.500z" fill="#fff" stroke="#000" /></Svg>
        </IndentMarker>
        <IndentMarker $left={81} $top={5}>
          <Svg w={9} h={13}><path d="M.5 12.500v-8l4-4 4 4v8zM.5 7.500h8" fill="#fff" stroke="#000" /></Svg>
        </IndentMarker>
        <IndentMarker $left={750} $top={5}>
          <Svg w={10} h={8}><path d="M.5 7.500v-3L5 .5l4.500 4v3z" fill="#fff" stroke="#000" /></Svg>
        </IndentMarker>
      </HStrip>
    </HRuler>
    <VScroll>
      <SplitHandle />
      <ScrollButton aria-label="Вверх"><Svg w={5} h={3}><path d="M0 3h5L2.500 0z" fill="#444" /></Svg></ScrollButton>
      <VTrack>
        <VThumb><Svg w={7} h={8}><path d="M0 .5h7M0 3.500h7M0 6.500h7" stroke="#444" /></Svg></VThumb>
      </VTrack>
      <ScrollButton aria-label="Вниз"><Down color="#444" /></ScrollButton>
      <ScrollButton aria-label="Предыдущая страница">
        <Svg w={5} h={7}><path d="M0 3h5L2.500 0zM0 6h5L2.500 3zM0 6h5v1H0z" fill="#000" /></Svg>
      </ScrollButton>
      <ScrollButton aria-label="Выбор объекта перехода">
        <Svg w={8} h={8}><circle cx="4" cy="4" r="3" fill="#c4c4c4" stroke="#333" /></Svg>
      </ScrollButton>
      <ScrollButton aria-label="Следующая страница">
        <Svg w={5} h={7}><path d="M0 0h5v1H0zM0 1h5L2.500 4zM0 4h5L2.500 7z" fill="#000" /></Svg>
      </ScrollButton>
    </VScroll>
    <VRuler>
      <VStrip>
        <VTicks><Ticks from={-1} to={15} vertical /></VTicks>
      </VStrip>
    </VRuler>
    <Document />
    <HScroll>
      <ViewButton aria-label="Обычный режим">
        <Svg w={9} h={8}><path d="M0 .5h8M0 2.500h8M0 4.500h8M0 6.500h8" stroke="#000" /></Svg>
      </ViewButton>
      <ViewButton aria-label="Режим веб-документа">
        <Svg w={9} h={8}><path d="M.5 6V.5h6V3M.5 5.500H3" stroke="#000" /><circle cx="6" cy="5" r="2" fill="#4a8" stroke="#000" /></Svg>
      </ViewButton>
      <ViewButton aria-label="Режим разметки" $active>
        <Svg w={9} h={8}><path d="M.5.5h7v7h-7zM2 2.500h4M2 4.500h4" stroke="#000" /></Svg>
      </ViewButton>
      <ViewButton aria-label="Режим структуры">
        <Svg w={9} h={8}><path d="M0 .5h6M2 2.500h6M4 4.500h4M2 6.500h6" stroke="#000" /></Svg>
      </ViewButton>
      <ViewButton aria-label="Режим чтения">
        <Svg w={9} h={8}><path d="M.5.5h3l1 1 1-1h3v6h-3l-1 1-1-1h-3zM4.500 1v7" stroke="#000" /></Svg>
      </ViewButton>
      <ScrollButton aria-label="Влево"><Svg w={4} h={7}><path d="M4 0v7L0 3.500z" fill="#333" /></Svg></ScrollButton>
      <HThumb><Svg w={8} h={7}><path d="M.5 0v7M3.500 0v7M6.500 0v7" stroke="#444" /></Svg></HThumb>
      <ScrollButton aria-label="Вправо"><Svg w={4} h={7}><path d="M0 0v7l4-3.500z" fill="#333" /></Svg></ScrollButton>
    </HScroll>
  </Editor>
)

const NavArrow = ({ flip }) => (
  <Svg w={14} h={14} transform={flip ? "scale(-1 1)" : undefined}>
    <circle cx="7" cy="7" r="6.500" fill="#dcdcde" />
    <path d="M2.500 7l4-4v2.500h4v3h-4V11z" fill="#e8e8e8" stroke="#a4a4a8" />
  </Svg>
)

const TaskPane = () => (
  <Pane>
    <PaneHead>
      <Grip />
      <h2>Приступая к работе</h2>
      <DropButton aria-label="Другие области задач">
        <Svg w={9} h={5}><path d="M0 0h9L4.500 5z" fill="#000" /></Svg>
      </DropButton>
      <Spacer $width={7} />
      <DropButton aria-label="Закрыть область задач"><Cross /></DropButton>
    </PaneHead>
    <PaneNav>
      <PaneNavButton aria-label="Назад"><NavArrow /></PaneNavButton>
      <PaneNavButton aria-label="Вперед"><NavArrow flip /></PaneNavButton>
      <PaneNavButton aria-label="Домой">{icons.home}</PaneNavButton>
    </PaneNav>
    <Section $headPad="6px 9px 0">
      <h3>Office в Интернете</h3>
      <NewsList $dot="#ff8c00">
        <li><PaneLink href="#online">Microsoft Office Online</PaneLink></li>
        <li><PaneLink href="#news">Последние сведения об использовании Word</PaneLink></li>
        <li><PaneLink href="#update">Автоматически обновлять этот список из Веба</PaneLink></li>
        <li><PaneLink href="#more" $muted>Дополнительно…</PaneLink></li>
      </NewsList>
      <SearchForm>
        <label htmlFor="office-search">Искать:</label>
        <input id="office-search" />
        <button aria-label="Найти">
          <Svg w={18} h={18}>
            <rect width="18" height="18" rx="2" fill="#1f9430" />
            <path d="M3 9h11M9.500 4.500L14 9l-4.500 4.500" stroke="#fff" strokeWidth="2" />
          </Svg>
        </button>
      </SearchForm>
      <Example><span>Пример:</span><span>"Печать нескольких копий"</span></Example>
    </Section>
    <Section $headPad="0 9px">
      <h3>Открыть</h3>
      <FileLink href="#open">{icons.folder}Открыть…</FileLink>
      <FileLink href="#create">{icons.page}Создать документ…</FileLink>
    </Section>
    <Tip role="tooltip">Перейти на домашнюю страницу Microsoft Office Online</Tip>
  </Pane>
)

const BottomBars = () => (
  <>
    <ToolRow $height={28} $line="1px solid #a7a6aa">
      <Toolbar>
        <Grip />
        <TextButton><span><u>Р</u>исование</span><Down /></TextButton>
        <ToolButton aria-label="Выбор объектов">{icons.cursor}</ToolButton>
        <Separator />
        <TextButton><span>Автофи<u>г</u>уры</span><Down /></TextButton>
        <Tools items={drawingTools} />
        <ToolButton aria-label="Цвет шрифта"><LetterBar color="#ff0000" /></ToolButton>
        <DropButton aria-label="Цвет шрифта: варианты"><Down /></DropButton>
        <Tools items={shapeTools} />
        <End />
      </Toolbar>
    </ToolRow>
    <StatusBar>
      {statuses.map(([text, width, muted]) => (
        <Status key={text} $width={width} $muted={muted}>{text}</Status>
      ))}
      {icons.bookCheck}
    </StatusBar>
    <TaskBar>
      <StartButton aria-label="Пуск">{icons.flag}</StartButton>
      {tasks.map(([icon, title, active]) => (
        <TaskButton key={title} $active={active}>
          {icon === "word" ? <WordIcon /> : icons[icon]}
          {title}
        </TaskButton>
      ))}
      <Tray>
        <Language>RU</Language>
        {icons.keyboard}
        <Spacer $width={10} />
        <Svg w={4} h={7}><path d="M4 0v7L0 3.500z" fill="#fff" /></Svg>
        <Spacer $width={4} />
        {icons.usb}
        {icons.bTray}
        {icons.agent}
        {icons.skype}
        {icons.avast}
        <Spacer $width={4} />
        <time>22:01</time>
      </Tray>
    </TaskBar>
  </>
)

const App = () => (
  <Desktop>
    <GlobalStyle />
    <TopBars />
    <Work>
      <EditorArea />
      <TaskPane />
    </Work>
    <BottomBars />
  </Desktop>
)

export default App
